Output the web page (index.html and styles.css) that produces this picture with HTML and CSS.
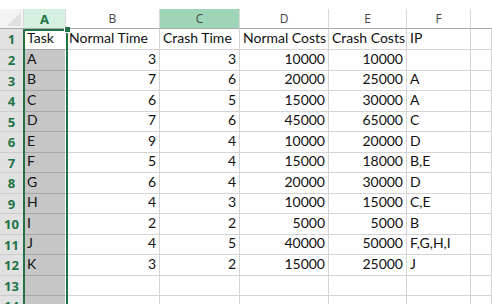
FILE: index.html
```html
<!DOCTYPE html>
<html lang="en">
  <head>
    <meta charset="UTF-8" />
    <title>Sheet1</title>
    <link rel="stylesheet" href="styles.css">
  </head>
  <body>
    <div class="sheet">
      <div class="grid">
        <div class="corner"><span class="tri"></span></div>
        <div class="colhead sel-col">A</div>
        <div class="colhead">B</div>
        <div class="colhead hover">C</div>
        <div class="colhead">D</div>
        <div class="colhead">E</div>
        <div class="colhead">F</div>
        <div class="colhead last"></div>

        <div class="rowhead">1</div>
        <div class="cell a active">Task</div>
        <div class="cell">Normal Time</div>
        <div class="cell">Crash Time</div>
        <div class="cell">Normal Costs</div>
        <div class="cell">Crash Costs</div>
        <div class="cell">IP</div>
        <div class="cell"></div>

        <div class="rowhead">2</div>
        <div class="cell a">A</div>
        <div class="cell num">3</div>
        <div class="cell num">3</div>
        <div class="cell num">10000</div>
        <div class="cell num">10000</div>
        <div class="cell"></div>
        <div class="cell"></div>

        <div class="rowhead">3</div>
        <div class="cell a">B</div>
        <div class="cell num">7</div>
        <div class="cell num">6</div>
        <div class="cell num">20000</div>
        <div class="cell num">25000</div>
        <div class="cell">A</div>
        <div class="cell"></div>

        <div class="rowhead">4</div>
        <div class="cell a">C</div>
        <div class="cell num">6</div>
        <div class="cell num">5</div>
        <div class="cell num">15000</div>
        <div class="cell num">30000</div>
        <div class="cell">A</div>
        <div class="cell"></div>

        <div class="rowhead">5</div>
        <div class="cell a">D</div>
        <div class="cell num">7</div>
        <div class="cell num">6</div>
        <div class="cell num">45000</div>
        <div class="cell num">65000</div>
        <div class="cell">C</div>
        <div class="cell"></div>

        <div class="rowhead">6</div>
        <div class="cell a">E</div>
        <div class="cell num">9</div>
        <div class="cell num">4</div>
        <div class="cell num">10000</div>
        <div class="cell num">20000</div>
        <div class="cell">D</div>
        <div class="cell"></div>

        <div class="rowhead">7</div>
        <div class="cell a">F</div>
        <div class="cell num">5</div>
        <div class="cell num">4</div>
        <div class="cell num">15000</div>
        <div class="cell num">18000</div>
        <div class="cell">B,E</div>
        <div class="cell"></div>

        <div class="rowhead">8</div>
        <div class="cell a">G</div>
        <div class="cell num">6</div>
        <div class="cell num">4</div>
        <div class="cell num">20000</div>
        <div class="cell num">30000</div>
        <div class="cell">D</div>
        <div class="cell"></div>

        <div class="rowhead">9</div>
        <div class="cell a">H</div>
        <div class="cell num">4</div>
        <div class="cell num">3</div>
        <div class="cell num">10000</div>
        <div class="cell num">15000</div>
        <div class="cell">C,E</div>
        <div class="cell"></div>

        <div class="rowhead">10</div>
        <div class="cell a">I</div>
        <div class="cell num">2</div>
        <div class="cell num">2</div>
        <div class="cell num">5000</div>
        <div class="cell num">5000</div>
        <div class="cell">B</div>
        <div class="cell"></div>

        <div class="rowhead">11</div>
        <div class="cell a">J</div>
        <div class="cell num">4</div>
        <div class="cell num">5</div>
        <div class="cell num">40000</div>
        <div class="cell num">50000</div>
        <div class="cell">F,G,H,I</div>
        <div class="cell"></div>

        <div class="rowhead">12</div>
        <div class="cell a">K</div>
        <div class="cell num">3</div>
        <div class="cell num">2</div>
        <div class="cell num">15000</div>
        <div class="cell num">25000</div>
        <div class="cell">J</div>
        <div class="cell"></div>

        <div class="rowhead">13</div>
        <div class="cell a"></div>
        <div class="cell"></div>
        <div class="cell"></div>
        <div class="cell"></div>
        <div class="cell"></div>
        <div class="cell"></div>
        <div class="cell"></div>

        <div class="rowhead">14</div>
        <div class="cell a"></div>
        <div class="cell"></div>
        <div class="cell"></div>
        <div class="cell"></div>
        <div class="cell"></div>
        <div class="cell"></div>
        <div class="cell"></div>
      </div>
      <div class="selection"><span class="handle"></span></div>
    </div>
  </body>
</html>
```

FILE: styles.css
```css
body {
  margin: 0;
  padding: 0;
  background: #fff;
  overflow: hidden;
}

.sheet {
  position: relative;
  padding-top: 9px;
  height: 295px;
  overflow: hidden;
}

.grid {
  display: grid;
  grid-template-columns: 24px 42px 94px 80px 89px 78px 64px 1fr;
  grid-template-rows: 20px 21px 21px 20px 21px 20px 21px 20px 21px 20px 21px 20px 21px 20px 21px;
  font-family: Lato, "Liberation Sans", sans-serif;
  font-size: 14px;
  color: #111;
}

.corner {
  position: relative;
  background: #f3f3f3;
  border-right: 1px solid #dadada;
  border-bottom: 1px solid #ababab;
}

.corner .tri {
  position: absolute;
  right: 2px;
  bottom: 2px;
  width: 0;
  height: 0;
  border-left: 14px solid transparent;
  border-bottom: 14px solid #dfdfdf;
}

.colhead {
  background: #fff;
  border-right: 1px solid #dadada;
  border-bottom: 1px solid #ababab;
  display: flex;
  align-items: center;
  justify-content: center;
  font-family: "Open Sans", "Liberation Sans", sans-serif;
  font-size: 12px;
  color: #444;
}

.colhead.sel-col {
  background: #d3f0e0;
  color: #217346;
  font-weight: bold;
  font-size: 13px;
}

.colhead.hover {
  background: #9fd5b7;
}

.colhead.last {
  border-right: 0;
}

.rowhead {
  background: #e1e1e1;
  border-right: 1px solid #ababab;
  border-bottom: 1px solid #cbcbcb;
  display: flex;
  align-items: center;
  justify-content: center;
  font-family: "Open Sans", "Liberation Sans", sans-serif;
  font-size: 13px;
  font-weight: bold;
  color: #217346;
}

.cell {
  border-right: 1px solid #d4d4d4;
  border-bottom: 1px solid #d4d4d4;
  padding: 0 3px 3px;
  display: flex;
  align-items: flex-end;
  white-space: nowrap;
  overflow: hidden;
  line-height: 16px;
}

.cell.num {
  justify-content: flex-end;
}

.cell.a {
  background: #c6c6c6;
  border-bottom-color: #a6a6a6;
  border-right-color: #fff;
}

.cell.a.active {
  background: #fff;
}

.selection {
  position: absolute;
  left: 23px;
  top: 29px;
  width: 41px;
  height: 290px;
  border: 2px solid #217346;
  border-bottom: 0;
}

.selection .handle {
  position: absolute;
  right: -4px;
  top: -4px;
  width: 5px;
  height: 5px;
  background: #217346;
  border: 1px solid #fff;
  border-top: 0;
  border-right: 0;
}
```
